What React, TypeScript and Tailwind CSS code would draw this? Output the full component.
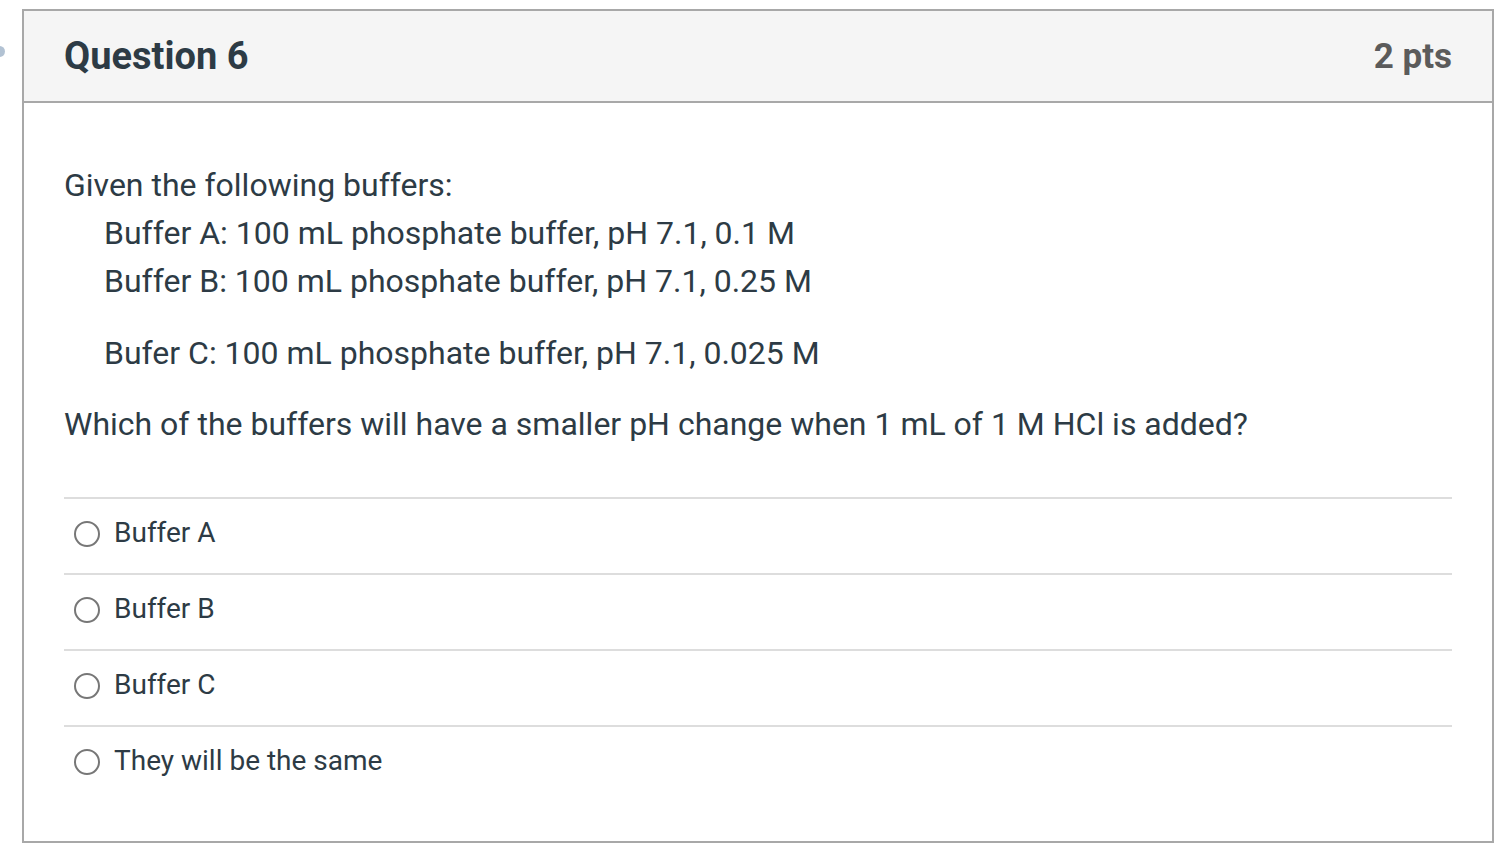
import React from "react";

const answers = ["Buffer A", "Buffer B", "Buffer C", "They will be the same"];

export default function App() {
  return (
    <div
      className="relative min-h-[864px] bg-white text-[#2d3b45]"
      style={{ fontFamily: "Roboto, 'Liberation Sans', sans-serif" }}
    >
      <div className="absolute left-[-6px] top-[46px] h-[11px] w-[11px] rounded-full bg-[#9fb3c8] opacity-80" />
      <div className="pt-[9px] pl-[22px]">
        <div className="w-[1472px] border-2 border-[#a8a8a8]">
          <div className="flex h-[92px] items-center justify-between border-b-2 border-[#a8a8a8] bg-[#f5f5f5] px-[40px]">
            <h2 className="text-[38px] font-bold leading-none text-[#2d3b45]">Question 6</h2>
            <div className="text-[35px] font-bold leading-none text-[#5b5b5b]">2 pts</div>
          </div>
          <div className="px-[40px] pt-[58px] pb-[40px]">
            <div className="text-[32px] leading-[48px]">
              <p>Given the following buffers:</p>
              <p className="pl-[40px]">Buffer A: 100 mL phosphate buffer, pH 7.1, 0.1 M</p>
              <p className="pl-[40px]">Buffer B: 100 mL phosphate buffer, pH 7.1, 0.25 M</p>
              <p className="mt-[24px] pl-[40px]">Bufer C: 100 mL phosphate buffer, pH 7.1, 0.025 M</p>
              <p className="mt-[23px]">Which of the buffers will have a smaller pH change when 1 mL of 1 M HCl is added?</p>
            </div>
            <div className="mt-[49px]">
              {answers.map((a) => (
                <div
                  key={a}
                  className="flex h-[76px] items-center border-t-2 border-[#dddddd] pb-[4px]"
                >
                  <span className="ml-[10px] h-[26px] w-[26px] rounded-full border-2 border-[#777777] bg-white" />
                  <span className="relative top-[-1px] ml-[14px] text-[28px] leading-none">{a}</span>
                </div>
              ))}
            </div>
          </div>
        </div>
      </div>
    </div>
  );
}
